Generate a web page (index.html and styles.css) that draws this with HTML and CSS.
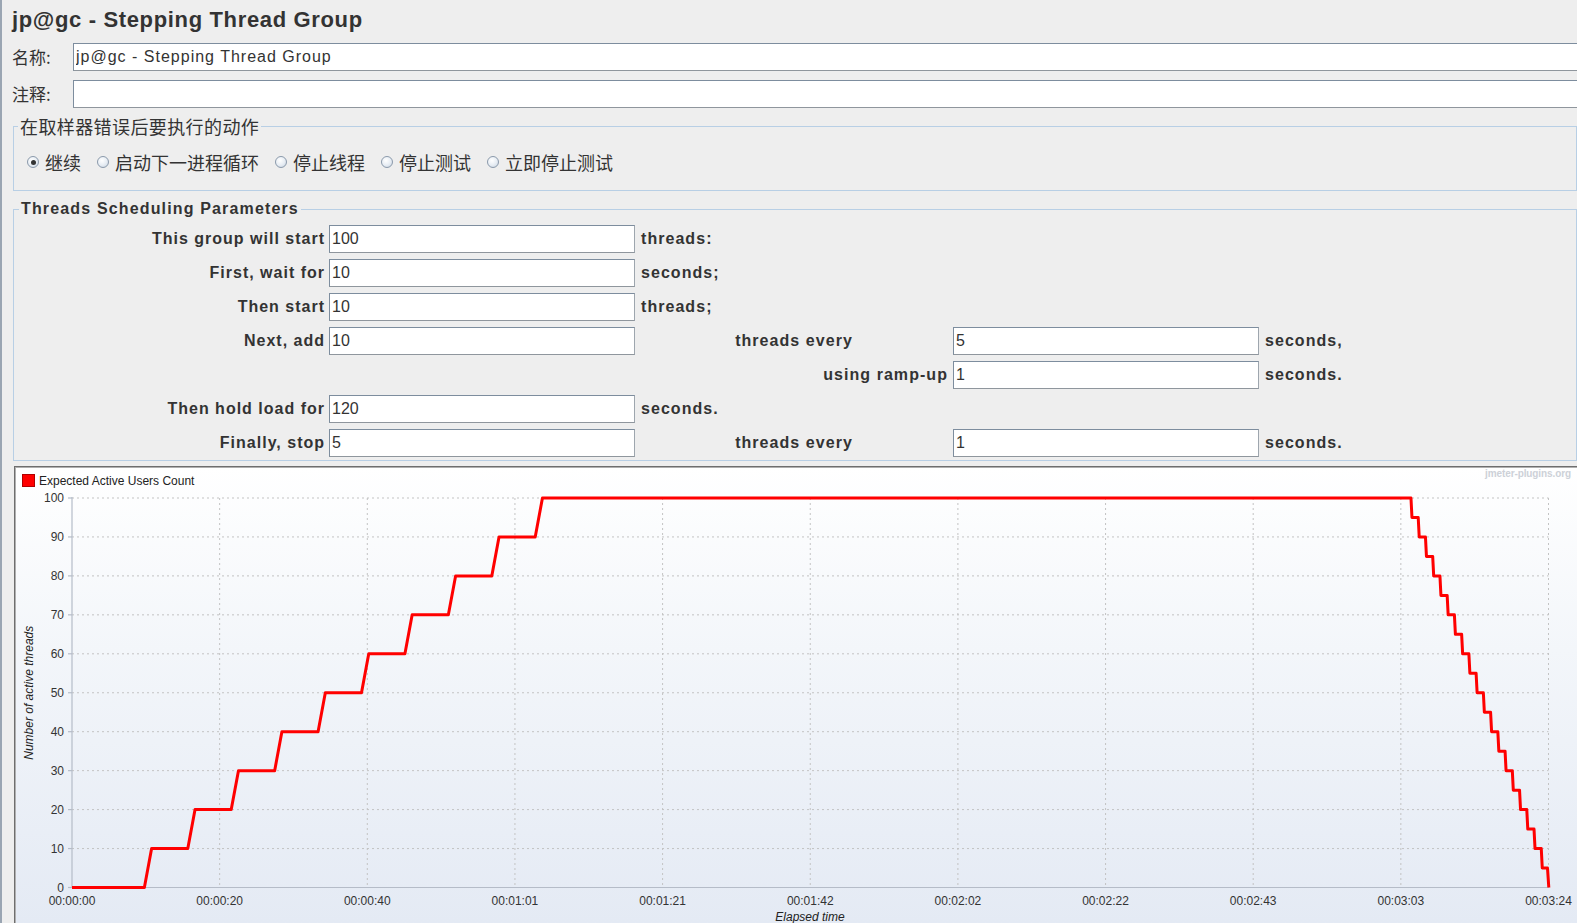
FILE: index.html
```html
<!DOCTYPE html>
<html lang="zh-CN">
<head>
  <meta charset="UTF-8">
  <title>jp@gc - Stepping Thread Group</title>
  <link rel="stylesheet" href="styles.css">
</head>
<body>
<div class="page">
  <h1 class="title">jp@gc - Stepping Thread Group</h1>

  <div class="fields">
    <div class="field-row">
      <label class="field-label">名称:</label>
      <input class="field-input" type="text" value="jp@gc - Stepping Thread Group">
    </div>
    <div class="field-row">
      <label class="field-label">注释:</label>
      <input class="field-input" type="text" value="">
    </div>
  </div>

  <fieldset class="box on-error">
    <legend>在取样器错误后要执行的动作</legend>
    <div class="radio-row">
      <span class="radio-item"><span class="radio checked"></span>继续</span>
      <span class="radio-item"><span class="radio"></span>启动下一进程循环</span>
      <span class="radio-item"><span class="radio"></span>停止线程</span>
      <span class="radio-item"><span class="radio"></span>停止测试</span>
      <span class="radio-item"><span class="radio"></span>立即停止测试</span>
    </div>
  </fieldset>

  <fieldset class="box params">
    <legend>Threads Scheduling Parameters</legend>
    <div class="param-grid">
      <span class="p-label">This group will start</span>
      <input class="p-input c2" type="text" value="100">
      <span class="p-unit c3">threads:</span>

      <span class="p-label">First, wait for</span>
      <input class="p-input c2" type="text" value="10">
      <span class="p-unit c3">seconds;</span>

      <span class="p-label">Then start</span>
      <input class="p-input c2" type="text" value="10">
      <span class="p-unit c3">threads;</span>

      <span class="p-label">Next, add</span>
      <input class="p-input c2" type="text" value="10">
      <span class="p-mid c3">threads every</span>
      <input class="p-input c4" type="text" value="5">
      <span class="p-unit c5">seconds,</span>

      <span class="p-right c3">using ramp-up</span>
      <input class="p-input c4" type="text" value="1">
      <span class="p-unit c5">seconds.</span>

      <span class="p-label">Then hold load for</span>
      <input class="p-input c2" type="text" value="120">
      <span class="p-unit c3">seconds.</span>

      <span class="p-label">Finally, stop</span>
      <input class="p-input c2" type="text" value="5">
      <span class="p-mid c3">threads every</span>
      <input class="p-input c4" type="text" value="1">
      <span class="p-unit c5">seconds.</span>
    </div>
  </fieldset>

  <div class="chart">
    <!-- viewBox uses page coordinates so the plot numbers read straight off the screen -->
    <svg class="chart-svg" width="1562" height="456" viewBox="15 467 1562 456">
      <rect x="22.5" y="474.5" width="12" height="12" fill="#ff0000" stroke="#b00000"/>
      <text class="legend-text" x="39" y="485">Expected Active Users Count</text>
      <text class="brand" x="1571" y="477" text-anchor="end">jmeter-plugins.org</text>

      <g class="grid">
        <line x1="219.65" y1="498" x2="219.65" y2="887.5"/>
        <line x1="367.3" y1="498" x2="367.3" y2="887.5"/>
        <line x1="514.95" y1="498" x2="514.95" y2="887.5"/>
        <line x1="662.6" y1="498" x2="662.6" y2="887.5"/>
        <line x1="810.25" y1="498" x2="810.25" y2="887.5"/>
        <line x1="957.9" y1="498" x2="957.9" y2="887.5"/>
        <line x1="1105.55" y1="498" x2="1105.55" y2="887.5"/>
        <line x1="1253.2" y1="498" x2="1253.2" y2="887.5"/>
        <line x1="1400.85" y1="498" x2="1400.85" y2="887.5"/>
        <line x1="1548.5" y1="498" x2="1548.5" y2="887.5"/>

        <line x1="72" y1="848.55" x2="1548.5" y2="848.55"/>
        <line x1="72" y1="809.6" x2="1548.5" y2="809.6"/>
        <line x1="72" y1="770.65" x2="1548.5" y2="770.65"/>
        <line x1="72" y1="731.7" x2="1548.5" y2="731.7"/>
        <line x1="72" y1="692.75" x2="1548.5" y2="692.75"/>
        <line x1="72" y1="653.8" x2="1548.5" y2="653.8"/>
        <line x1="72" y1="614.85" x2="1548.5" y2="614.85"/>
        <line x1="72" y1="575.9" x2="1548.5" y2="575.9"/>
        <line x1="72" y1="536.95" x2="1548.5" y2="536.95"/>
        <line x1="72" y1="498" x2="1548.5" y2="498"/>
      </g>

      <g class="axis">
        <line x1="72" y1="497" x2="72" y2="888"/>
        <line x1="72" y1="887.5" x2="1549" y2="887.5"/>
        <line x1="68" y1="887.5" x2="72" y2="887.5"/>
        <line x1="68" y1="848.55" x2="72" y2="848.55"/>
        <line x1="68" y1="809.6" x2="72" y2="809.6"/>
        <line x1="68" y1="770.65" x2="72" y2="770.65"/>
        <line x1="68" y1="731.7" x2="72" y2="731.7"/>
        <line x1="68" y1="692.75" x2="72" y2="692.75"/>
        <line x1="68" y1="653.8" x2="72" y2="653.8"/>
        <line x1="68" y1="614.85" x2="72" y2="614.85"/>
        <line x1="68" y1="575.9" x2="72" y2="575.9"/>
        <line x1="68" y1="536.95" x2="72" y2="536.95"/>
        <line x1="68" y1="498" x2="72" y2="498"/>
      </g>

      <g class="tick-label" text-anchor="end">
        <text x="64" y="891.5">0</text>
        <text x="64" y="852.5">10</text>
        <text x="64" y="813.6">20</text>
        <text x="64" y="774.6">30</text>
        <text x="64" y="735.7">40</text>
        <text x="64" y="696.7">50</text>
        <text x="64" y="657.8">60</text>
        <text x="64" y="618.8">70</text>
        <text x="64" y="579.9">80</text>
        <text x="64" y="540.9">90</text>
        <text x="64" y="502">100</text>
      </g>

      <g class="tick-label" text-anchor="middle">
        <text x="72" y="905">00:00:00</text>
        <text x="219.65" y="905">00:00:20</text>
        <text x="367.3" y="905">00:00:40</text>
        <text x="514.95" y="905">00:01:01</text>
        <text x="662.6" y="905">00:01:21</text>
        <text x="810.25" y="905">00:01:42</text>
        <text x="957.9" y="905">00:02:02</text>
        <text x="1105.55" y="905">00:02:22</text>
        <text x="1253.2" y="905">00:02:43</text>
        <text x="1400.85" y="905">00:03:03</text>
        <text x="1548.5" y="905">00:03:24</text>
      </g>

      <text class="axis-title" x="810" y="921" text-anchor="middle">Elapsed time</text>
      <text class="axis-title" x="33" y="692.75" text-anchor="middle" transform="rotate(-90 33 692.75)">Number of active threads</text>

      <polyline class="series" points="72,887.5 144.38,887.5 151.61,848.55 187.8,848.55 195.04,809.6 231.23,809.6 238.47,770.65 274.66,770.65 281.89,731.7 318.08,731.7 325.32,692.75 361.51,692.75 368.75,653.8 404.93,653.8 412.17,614.85 448.36,614.85 455.6,575.9 491.79,575.9 499.02,536.95 535.21,536.95 542.45,498 1410.97,498 1411.97,517.48 1418.21,517.48 1419.21,536.95 1425.45,536.95 1426.45,556.43 1432.69,556.43 1433.69,575.9 1439.93,575.9 1440.93,595.38 1447.16,595.38 1448.16,614.85 1454.4,614.85 1455.4,634.33 1461.64,634.33 1462.64,653.8 1468.88,653.8 1469.88,673.28 1476.11,673.28 1477.11,692.75 1483.35,692.75 1484.35,712.23 1490.59,712.23 1491.59,731.7 1497.83,731.7 1498.83,751.18 1505.07,751.18 1506.07,770.65 1512.3,770.65 1513.3,790.13 1519.54,790.13 1520.54,809.6 1526.78,809.6 1527.78,829.08 1534.02,829.08 1535.02,848.55 1541.26,848.55 1542.26,868.03 1547.5,868.03 1548.8,887.5"/>
    </svg>
  </div>
</div>
</body>
</html>
```

FILE: styles.css
```css
* {
  box-sizing: border-box;
}
html, body {
  margin: 0;
  height: 100%;
  overflow: hidden;
}
body {
  background: #eeeeee;
  color: #333;
  font-family: "Liberation Sans", Arial, "Noto Sans CJK SC", sans-serif;
}
.page {
  height: 923px;
  border-left: 2px solid #9aa5b2;
  padding-left: 11px;
}
.title {
  margin: 0 0 0 -1px;
  height: 40px;
  line-height: 40px;
  font-size: 22px;
  font-weight: bold;
  letter-spacing: 0.65px;
  color: #333;
}

/* name / comment */
.fields {
  display: grid;
  row-gap: 9px;
  padding-top: 3px;
}
.field-row {
  display: flex;
  align-items: center;
  height: 28px;
}
.field-label {
  width: 61px;
  margin-left: -1px;
  font-family: "Noto Sans CJK SC", sans-serif;
  font-size: 17px;
  line-height: 20px;
  color: #333;
}
.field-input {
  flex: 1;
  height: 28px;
  margin-right: -12px;
  padding: 0 2px;
  border: 1px solid;
  border-color: #7d8d9e #9ea6ae #8f969d #7d8d9e;
  background: #fff;
  color: #333;
  font-family: "Liberation Sans", Arial, sans-serif;
  font-size: 16px;
  letter-spacing: 1px;
  outline: none;
}

/* titled boxes */
.box {
  margin: 0;
  padding: 0;
  border: 1px solid #b8cfe5;
  min-width: 0;
}
.box legend {
  margin-left: 5px;
  padding: 0 2px;
  height: 22px;
  line-height: 22px;
  color: #333;
}
.on-error {
  margin-top: 7px;
  padding: 13px 0 16px 0;
}
.on-error legend {
  font-family: "Noto Sans CJK SC", sans-serif;
  font-size: 18px;
  letter-spacing: 0.4px;
  margin-left: 4px;
}
.radio-row {
  display: flex;
  align-items: center;
  gap: 16px;
  height: 24px;
  padding-left: 13px;
  font-family: "Noto Sans CJK SC", sans-serif;
  font-size: 18px;
  line-height: 24px;
}
.radio-item {
  display: flex;
  align-items: center;
  gap: 6px;
}
.radio {
  position: relative;
  width: 12px;
  height: 12px;
  border-radius: 50%;
  border: 1px solid #8b9aab;
  background: radial-gradient(circle at 40% 35%, #ffffff 0%, #e6ecf3 55%, #c4d0dd 100%);
}
.radio.checked::after {
  content: "";
  position: absolute;
  left: 2.5px;
  top: 2.5px;
  width: 5px;
  height: 5px;
  border-radius: 50%;
  background: #333;
}

/* scheduling parameters */
.params {
  margin-top: 7px;
  padding: 5px 0 3px 0;
}
.params legend {
  font-size: 16px;
  font-weight: bold;
  letter-spacing: 1.15px;
}
.param-grid {
  display: grid;
  grid-template-columns: 310px 306px 308px 306px 1fr;
  grid-auto-rows: 28px;
  column-gap: 5px;
  row-gap: 6px;
  align-items: center;
  font-size: 16px;
  font-weight: bold;
  letter-spacing: 1.05px;
}
.p-label {
  grid-column: 1;
  text-align: right;
  letter-spacing: 1px;
  margin-right: -1px;
}
.c2 { grid-column: 2; }
.c3 { grid-column: 3; }
.c4 { grid-column: 4; }
.c5 { grid-column: 5; }
.p-input {
  height: 28px;
  width: 100%;
  padding: 0 2px;
  border: 1px solid;
  border-color: #7d8d9e #9ea6ae #8f969d #7d8d9e;
  background: #fff;
  color: #333;
  font-family: "Liberation Sans", Arial, sans-serif;
  font-size: 16px;
  letter-spacing: 0;
  outline: none;
}
.p-unit {
  padding-left: 1px;
}
.p-mid {
  text-align: center;
}
.p-right {
  text-align: right;
}

/* chart */
.chart {
  margin-top: 5px;
  margin-left: 1px;
  height: 457px;
  border-top: 1px solid #6e6e6e;
  border-left: 1px solid #6e6e6e;
  box-shadow: inset 1px 1px 0 #b0b0b0;
  background: linear-gradient(#ffffff 0%, #f3f6fa 40%, #e4eaf4 100%);
}
.chart-svg {
  display: block;
  font-family: "Liberation Sans", Arial, sans-serif;
}
.legend-text {
  font-size: 12px;
  fill: #222;
}
.brand {
  font-size: 10px;
  font-weight: bold;
  letter-spacing: -0.1px;
  fill: #cdd1d8;
}
.grid line {
  stroke: #c3c3c3;
  stroke-width: 1;
  stroke-dasharray: 2 3;
}
.axis line {
  stroke: #b5bcc8;
  stroke-width: 1.2;
}
.tick-label text {
  font-size: 12px;
  fill: #333;
}
.axis-title {
  font-size: 12px;
  font-style: italic;
  fill: #222;
}
.series {
  fill: none;
  stroke: #ff0000;
  stroke-width: 3;
  stroke-linejoin: round;
}
```
